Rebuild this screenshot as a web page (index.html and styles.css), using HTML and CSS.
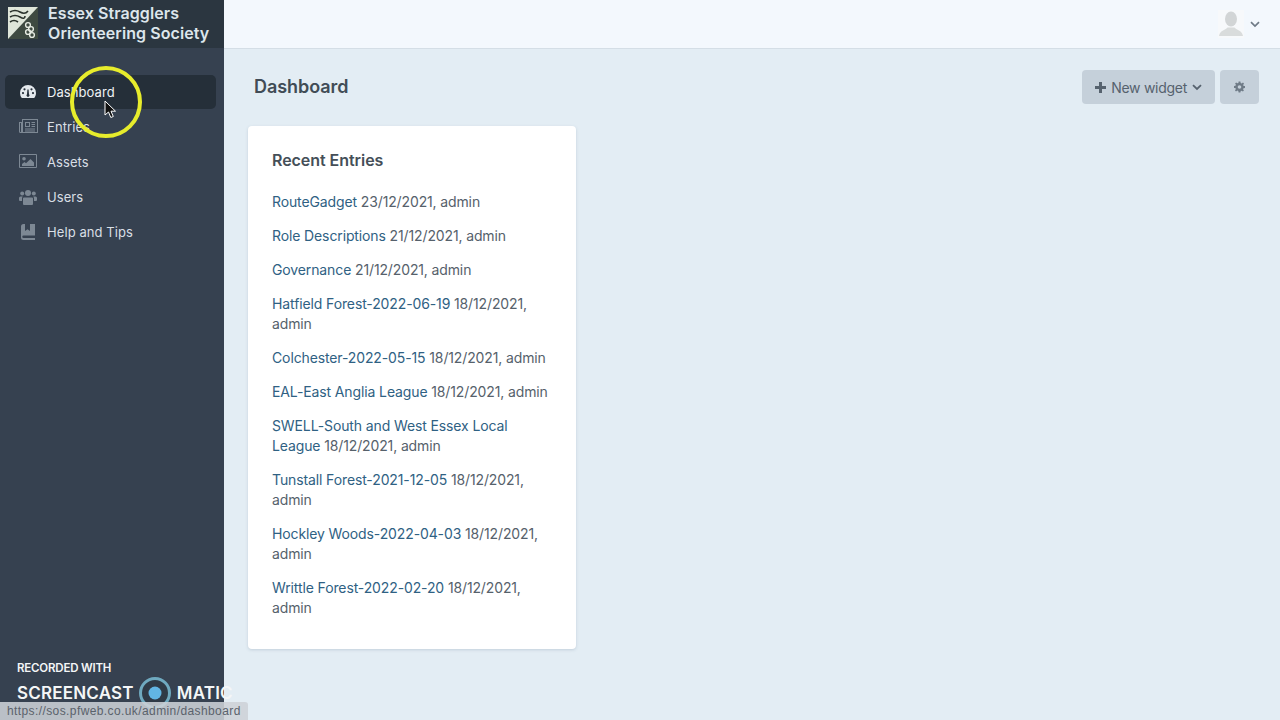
FILE: index.html
```html
<!DOCTYPE html>
<html lang="en">
<head>
<meta charset="utf-8">
<title>Dashboard</title>
<link rel="stylesheet" href="styles.css">
</head>
<body>
<div class="app">
  <aside class="sidebar">
    <div class="brand">
      <svg class="logo" width="30" height="32" viewBox="0 0 30 32">
        <rect width="30" height="32" fill="#dfe6da"/>
        <path d="M30 0V32H0Z" fill="#3e4a41"/>
        <path d="M2 5q5-3 10 0t8-1M2 10q5-3 10 0t5-1M2 15q4-3 8 0" fill="none" stroke="#2b332d" stroke-width="1.6"/>
        <g fill="none" stroke="#e6ebe2" stroke-width="1.4"><circle cx="20" cy="18" r="2.4"/><circle cx="23" cy="22" r="2.4"/><circle cx="20" cy="25" r="2.4"/><circle cx="24" cy="28" r="2.4"/></g>
      </svg>
      <div class="brand-name">Essex Stragglers<br>Orienteering Society</div>
    </div>
    <nav class="nav">
      <a class="nav-item active">
        <svg class="nav-icon light" width="18" height="16" viewBox="0 0 18 16"><path fill-rule="evenodd" d="M9 1a8 8 0 0 1 8 8c0 2-.7 3.700-1.800 5H2.800A7.900 7.900 0 0 1 1 9a8 8 0 0 1 8-8Zm.6 4.500-1.200 0-.4 4.700a1.500 1.500 0 1 0 2 0ZM4 8a1.100 1.100 0 1 0 0 2.200A1.100 1.100 0 0 0 4 8Zm10 0a1.100 1.100 0 1 0 0 2.200A1.100 1.100 0 0 0 14 8ZM5.500 4.200a1.100 1.100 0 1 0 0 2.200 1.100 1.100 0 0 0 0-2.200Zm7 0a1.100 1.100 0 1 0 0 2.200 1.100 1.100 0 0 0 0-2.200Z"/></svg>
        <span>Dashboard</span>
      </a>
      <a class="nav-item">
        <svg class="nav-icon" width="19" height="14" viewBox="0 0 19 14"><path fill-rule="evenodd" d="M3 0h16v14H1.500A1.500 1.500 0 0 1 0 12.500V3h3Zm1 1v12h14V1ZM1 4v8.500a.5.500 0 0 0 1 0V4Zm5-1h5v5H6Zm1 1v3h3V4Zm5.500-1H16v1h-3.500Zm0 2H16v1h-3.500Zm0 2H16v1h-3.500ZM6 9.500h10v1H6ZM6 11.500h10v1H6Z"/></svg>
        <span>Entries</span>
      </a>
      <a class="nav-item">
        <svg class="nav-icon" width="18" height="14" viewBox="0 0 18 14"><path fill-rule="evenodd" d="M1 0h16a1 1 0 0 1 1 1v12a1 1 0 0 1-1 1H1a1 1 0 0 1-1-1V1a1 1 0 0 1 1-1Zm0 1v12h16V1ZM5 3a1.800 1.800 0 1 1 0 3.600A1.800 1.800 0 0 1 5 3ZM3 12v-2l2.500-2 1.500 1.200L11.500 5 15 8.500V12Z"/></svg>
        <span>Assets</span>
      </a>
      <a class="nav-item">
        <svg class="nav-icon" width="18" height="16" viewBox="0 0 18 16"><circle cx="9" cy="4" r="3"/><circle cx="3.200" cy="4.500" r="2"/><circle cx="14.800" cy="4.500" r="2"/><path d="M5 8.500h8a1 1 0 0 1 1 1V15a1 1 0 0 1-1 1H5a1 1 0 0 1-1-1V9.500a1 1 0 0 1 1-1ZM0 9a1.500 1.500 0 0 1 1.500-1.500h2.300A2.500 2.500 0 0 0 3 9.500V12H1a1 1 0 0 1-1-1ZM18 9a1.500 1.500 0 0 0-1.500-1.500h-2.300A2.500 2.500 0 0 1 15 9.500V12h2a1 1 0 0 0 1-1Z"/></svg>
        <span>Users</span>
      </a>
      <a class="nav-item">
        <svg class="nav-icon help" width="14" height="16" viewBox="0 0 14 16"><path fill-rule="evenodd" d="M2.500 0H4v7l2.500-1.800L9 7V0h5v11.500H2.500a1.200 1.200 0 0 0 0 2.500H14v2H2.500A2.500 2.500 0 0 1 0 13.500v-11A2.500 2.500 0 0 1 2.500 0Z"/></svg>
        <span>Help and Tips</span>
      </a>
    </nav>
    <div class="watermark">
      <div class="wm-top">RECORDED WITH</div>
      <div class="wm-main">
        <span>SCREENCAST</span>
        <svg class="wm-dot" width="34" height="34" viewBox="0 0 34 34"><circle cx="17" cy="17" r="14.500" fill="#2f3a46" stroke="#6fa9bf" stroke-width="3"/><circle cx="17" cy="17" r="6.500" fill="#62b5e3"/></svg>
        <span>MATIC</span>
      </div>
    </div>
  </aside>
  <div class="main">
    <header class="topbar">
      <div class="avatar">
        <svg width="26" height="28" viewBox="0 0 26 28"><rect width="26" height="28" fill="#f7f9fb"/><ellipse cx="13" cy="9" rx="6" ry="7.500" fill="#d2d5d6"/><path d="M1 26c1-6 7-6 8.500-8.500h7C18 20 24 20 25 26Z" fill="#d9dcdc"/></svg>
        <svg class="caret" width="10" height="7" viewBox="0 0 10 7"><path d="M1 1.200 5 5l4-3.800" fill="none" stroke="#6e7a86" stroke-width="1.700"/></svg>
      </div>
    </header>
    <section class="content">
      <div class="title-row">
        <h1>Dashboard</h1>
        <div class="actions">
          <button class="btn">
            <svg width="11" height="11" viewBox="0 0 11 11"><path d="M4 0h3v4h4v3H7v4H4V7H0V4h4Z" fill="#56626e"/></svg>
            <span>New widget</span>
            <svg width="10" height="7" viewBox="0 0 10 7"><path d="M1 1.200 5 5l4-3.800" fill="none" stroke="#56626e" stroke-width="1.800"/></svg>
          </button>
          <button class="btn btn-icon">
            <svg width="12" height="12" viewBox="0 0 12 12"><path fill-rule="evenodd" d="M5 0h2l.3 1.600 1.100.5L9.800 1.200l1.100 1.100-.9 1.400.5 1.100L12 5v2l-1.600.3-.5 1.100.9 1.400-1.100 1.100-1.400-.9-1.100.5L7 12H5l-.3-1.600-1.100-.5-1.400.9-1.100-1.100.9-1.400-.5-1.100L0 7V5l1.600-.3.5-1.100-.9-1.400 1.100-1.100 1.400.9 1.100-.5ZM6 4a2 2 0 1 0 0 4 2 2 0 0 0 0-4Z" fill="#6f7b87"/></svg>
          </button>
        </div>
      </div>
      <div class="card">
        <h2>Recent Entries</h2>
        <ul class="entries">
          <li><a>RouteGadget</a> 23/12/2021, admin</li>
          <li><a>Role Descriptions</a> 21/12/2021, admin</li>
          <li><a>Governance</a> 21/12/2021, admin</li>
          <li><a>Hatfield Forest-2022-06-19</a> 18/12/2021, admin</li>
          <li><a>Colchester-2022-05-15</a> 18/12/2021, admin</li>
          <li><a>EAL-East Anglia League</a> 18/12/2021, admin</li>
          <li><a>SWELL-South and West Essex Local League</a> 18/12/2021, admin</li>
          <li><a>Tunstall Forest-2021-12-05</a> 18/12/2021, admin</li>
          <li><a>Hockley Woods-2022-04-03</a> 18/12/2021, admin</li>
          <li><a>Writtle Forest-2022-02-20</a> 18/12/2021, admin</li>
        </ul>
      </div>
    </section>
  </div>
</div>
<div class="status-url">https://sos.pfweb.co.uk/admin/dashboard</div>
<div class="cursor-ring"></div>
<svg class="cursor" width="13" height="19" viewBox="0 0 13 19"><path d="M1 1v14l3.500-3 2.300 5.500 2.500-1-2.300-5.300H11.500Z" fill="#111" stroke="#fff" stroke-width="1"/></svg>
</body>
</html>
```
FILE: styles.css
```css
* { box-sizing: border-box; }
html, body { margin: 0; height: 100%; overflow: hidden; }
body { font-family: Inter, "Liberation Sans", sans-serif; font-size: 14px; color: #4a5560; background: #e3edf4; }
.app { display: flex; height: 720px; }
.sidebar { width: 224px; flex: none; background: #364150; display: flex; flex-direction: column; position: relative; }
.brand { height: 48px; background: #2b3640; display: flex; align-items: center; gap: 10px; padding: 0 0 2px 8px; flex: none; }
.logo { flex: none; }
.brand-name { color: #dde6ec; font-size: 16px; font-weight: 600; line-height: 20px; letter-spacing: .08px; white-space: nowrap; }
.nav { padding: 27px 8px 0 5px; display: flex; flex-direction: column; gap: 1px; }
.nav-item { height: 34px; display: flex; align-items: center; padding-left: 14px; color: #d9dfe5; font-size: 13px; border-radius: 5px; position: relative; letter-spacing: .08px; }
.nav-item.active { background: #252f39; color: #eef2f5; }
.nav-icon { fill: #7d8894; position: absolute; left: 14px; top: 9px; }
.nav-icon.light { fill: #e4e9ed; left: 14px; }
.nav-icon.help { left: 16px; }
.nav-item span { margin-left: 28px; }
.watermark { position: absolute; left: 17px; top: 660px; color: #f4f6f7; font-weight: 600; white-space: nowrap; }
.wm-top { font-size: 11.500px; line-height: 16px; letter-spacing: -.2px; }
.wm-main { display: flex; align-items: center; font-size: 17px; line-height: 34px; height: 34px; letter-spacing: .2px; }
.wm-dot { margin: 0 5px 0 4px; flex: none; }
.main { flex: 1; min-width: 0; display: flex; flex-direction: column; }
.topbar { height: 49px; flex: none; background: #f3f8fd; border-bottom: 1px solid #d4dee6; display: flex; justify-content: flex-end; align-items: center; padding: 0 20px 0 0; }
.avatar { display: flex; align-items: center; gap: 6px; }
.caret { flex: none; }
.content { flex: 1; padding: 21px 21px 0 24px; }
.title-row { display: flex; justify-content: space-between; align-items: center; height: 34px; padding-left: 6px; }
h1 { margin: 0 0 2px; font-size: 18px; font-weight: 600; color: #414c56; letter-spacing: -.05px; }
.actions { display: flex; gap: 5px; }
.btn { height: 34px; border: 0; background: #c5d0da; border-radius: 4px; display: flex; align-items: center; gap: 5px; padding: 0 13px; color: #56626e; font: 14px Inter, "Liberation Sans", sans-serif; letter-spacing: -.28px; }
.btn-icon { padding: 0 14px; width: 39px; }
.card { width: 328px; height: 523px; margin-top: 22px; background: #fff; border-radius: 4px; box-shadow: 0 1px 3px rgba(120, 140, 160, .3); padding: 24px; }
h2 { margin: 0 0 22px; font-size: 16px; font-weight: 600; line-height: 20px; color: #454f58; letter-spacing: -.05px; }
.entries { list-style: none; margin: 0; padding: 0; line-height: 20px; display: flex; flex-direction: column; gap: 14px; color: #56616b; letter-spacing: -.13px; }
.entries a { color: #2f6183; letter-spacing: -.12px; }
.status-url { position: absolute; left: 0; bottom: 0; height: 18px; width: 248px; padding: 0 0 0 7px; background: rgba(205, 210, 215, .88); color: #5a626b; font: 12px/18px "Liberation Sans", sans-serif; letter-spacing: .4px; border-top-right-radius: 3px; white-space: nowrap; }
.cursor-ring { position: absolute; left: 70px; top: 66px; width: 72px; height: 72px; border: 4px solid #e7ec2c; border-radius: 50%; }
.cursor { position: absolute; left: 104px; top: 100px; }
```
